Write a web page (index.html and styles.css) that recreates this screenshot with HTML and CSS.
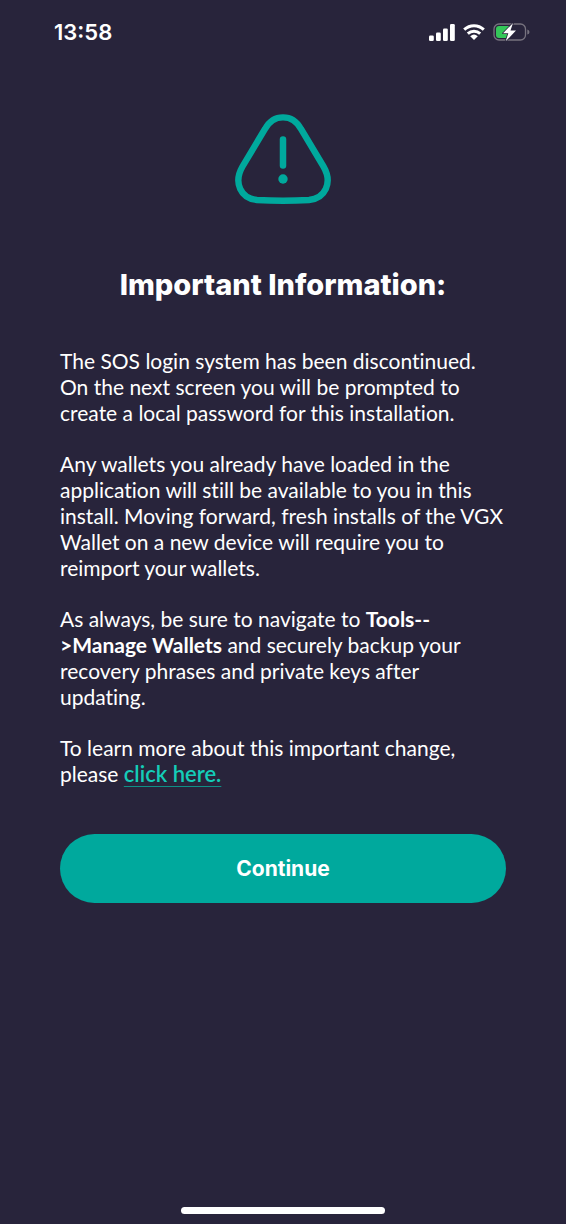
FILE: index.html
```html
<!DOCTYPE html>
<html lang="en">
<head>
<meta charset="utf-8">
<meta name="viewport" content="width=device-width, initial-scale=1">
<title>Important Information</title>
<link rel="stylesheet" href="styles.css">
</head>
<body>
<div class="screen">
  <header class="status">
    <time class="clock">13:58</time>
    <div class="indicators">
      <svg class="signal" viewBox="0 0 26 17" width="26" height="17" aria-label="Signal" role="img">
        <rect x="0" y="11.500" width="4.800" height="5.500" rx="1.300"/>
        <rect x="7" y="8.500" width="4.800" height="8.500" rx="1.300"/>
        <rect x="14" y="4.500" width="4.800" height="12.500" rx="1.300"/>
        <rect x="21" y="0" width="4.800" height="17" rx="1.300"/>
      </svg>
      <svg class="wifi" viewBox="0 0 22 16" width="22" height="16" aria-label="Wi-Fi" role="img">
        <path d="M1.200 5.600C6.800 .3 15.200 .3 20.800 5.600M4.800 9.600C8.400 6.300 13.600 6.300 17.200 9.600" fill="none" stroke="#fff" stroke-width="3"/>
        <path d="M7.200 12.200Q11 9 14.800 12.200L11 16Z"/>
      </svg>
      <svg class="battery" viewBox="0 0 37 20" width="37" height="20" aria-label="Battery charging" role="img">
        <rect x="1" y="2" width="31.500" height="16" rx="5" fill="none" stroke="#77737f" stroke-width="1.300"/>
        <path d="M34.300 7.500Q36.500 8 36.500 10T34.300 12.500Z" fill="#77737f"/>
        <path d="M6 4H17V16H6Q3 16 3 13V7Q3 4 6 4Z" fill="#34c759"/>
        <path d="M20 1L10 11.300H15.300L12.700 19.300L23 8.500H17.500Z" fill="#fff" stroke="#28243b" stroke-width="1.600" paint-order="stroke" stroke-linejoin="round"/>
      </svg>
    </div>
  </header>
  <main class="content">
    <svg class="warning" viewBox="0 0 96 90" width="96" height="90" aria-hidden="true">
      <path d="M30 15C38.500 -.5 57.500 -.5 66 15L88.500 52.500C98 69 90 84.500 74 86Q48 87.500 22 86C6 84.500 -2 69 7.500 52.500Z" fill="none" stroke="#00a99d" stroke-width="6.400"/>
      <path d="M48 25.500V51.500" fill="none" stroke="#00a99d" stroke-width="6.500" stroke-linecap="round"/>
      <circle cx="48" cy="65" r="4.700" fill="#00a99d"/>
    </svg>
    <h1 class="title">Important Information:</h1>
    <div class="copy">
      <p>The SOS login system has been discontinued.<br>On the next screen you will be prompted to<br>create a local password for this installation.</p>
      <p>Any wallets you already have loaded in the<br>application will still be available to you in this<br>install. Moving forward, fresh installs of the VGX<br>Wallet on a new device will require you to<br>reimport your wallets.</p>
      <p>As always, be sure to navigate to <strong>Tools--<br>&gt;Manage Wallets</strong> and securely backup your<br>recovery phrases and private keys after<br>updating.</p>
      <p>To learn more about this important change,<br>please <a class="link" href="#">click here.</a></p>
    </div>
    <button class="continue" type="button">Continue</button>
  </main>
  <div class="home-bar"></div>
</div>
</body>
</html>
```
FILE: styles.css
```css
* { box-sizing: border-box; }
body {
  margin: 0;
  background: #28243b;
  color: #fff;
  font-family: Lato, "Open Sans", sans-serif;
  font-variant-ligatures: none;
}
.screen {
  display: flex;
  flex-direction: column;
  min-height: 100vh;
  padding-bottom: 10px;
}
.status {
  display: flex;
  align-items: center;
  justify-content: space-between;
  height: 64px;
  padding: 0 36px 0 54px;
}
.clock {
  font: 600 22px/28px Inter, sans-serif;
}
.indicators {
  display: flex;
  align-items: center;
  gap: 8px;
}
.indicators svg { fill: #fff; }
.content {
  display: flex;
  flex-direction: column;
  flex: 1;
  padding: 50px 60px 0;
}
.warning { align-self: center; }
.title {
  margin: 61px 0 0;
  text-align: center;
  font: 800 29px/40px Inter, sans-serif;
}
.copy {
  display: flex;
  flex-direction: column;
  gap: 25px;
  margin-top: 43px;
  font-size: 21px;
  line-height: 26px;
}
.copy p { margin: 0; }
.copy strong { font-weight: 700; }
.link {
  color: #14ccb8;
  font-size: 22px;
  font-weight: 600;
  text-decoration: underline 1px #0f8f87;
  text-underline-offset: 4px;
}
.continue {
  margin-top: 47px;
  height: 69px;
  border: 0;
  border-radius: 35px;
  background: #00a99d;
  color: #fff;
  font: 700 21px/28px Inter, sans-serif;
}
.home-bar {
  align-self: center;
  width: 36%;
  height: 7px;
  border-radius: 4px;
  background: #fff;
}
```
